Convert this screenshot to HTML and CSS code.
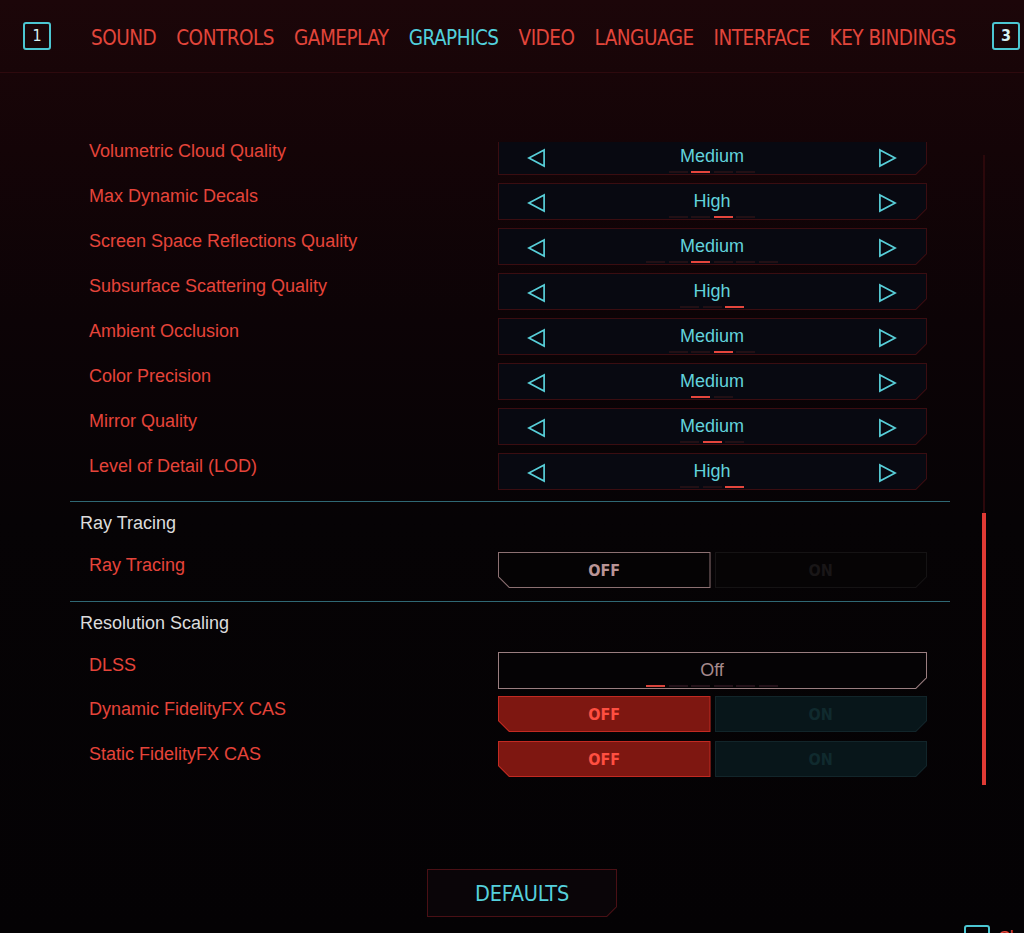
FILE: index.html
```html
<!DOCTYPE html>
<html lang="en">
<head>
<meta charset="utf-8">
<title>Settings - Graphics</title>
<link rel="stylesheet" href="styles.css">
</head>
<body>
<div class="screen">
  <header class="topbar">
    <span class="keycap">1</span>
    <nav class="tabs">
      <span class="tab">SOUND</span>
      <span class="tab">CONTROLS</span>
      <span class="tab">GAMEPLAY</span>
      <span class="tab tab-active">GRAPHICS</span>
      <span class="tab">VIDEO</span>
      <span class="tab">LANGUAGE</span>
      <span class="tab">INTERFACE</span>
      <span class="tab">KEY BINDINGS</span>
    </nav>
    <span class="keycap keycap-right">3</span>
  </header>

  <main class="main">
    <div class="viewport">
      <div class="list">
        <div class="group">
          <div class="row">
            <span class="label">Volumetric Cloud Quality</span>
            <div class="sel">
              <svg class="arrow" viewBox="0 0 20 20"><path d="M18 1.5 L2 10 L18 18.5 Z"/></svg>
              <div class="val"><span class="val-text">Medium</span><div class="dashes"><i></i><i class="on"></i><i></i><i></i></div></div>
              <svg class="arrow" viewBox="0 0 20 20"><path d="M2 1.5 L18 10 L2 18.5 Z"/></svg>
            </div>
          </div>
          <div class="row">
            <span class="label">Max Dynamic Decals</span>
            <div class="sel">
              <svg class="arrow" viewBox="0 0 20 20"><path d="M18 1.5 L2 10 L18 18.5 Z"/></svg>
              <div class="val"><span class="val-text">High</span><div class="dashes"><i></i><i></i><i class="on"></i><i></i></div></div>
              <svg class="arrow" viewBox="0 0 20 20"><path d="M2 1.5 L18 10 L2 18.5 Z"/></svg>
            </div>
          </div>
          <div class="row">
            <span class="label">Screen Space Reflections Quality</span>
            <div class="sel">
              <svg class="arrow" viewBox="0 0 20 20"><path d="M18 1.5 L2 10 L18 18.5 Z"/></svg>
              <div class="val"><span class="val-text">Medium</span><div class="dashes"><i></i><i></i><i class="on"></i><i></i><i></i><i></i></div></div>
              <svg class="arrow" viewBox="0 0 20 20"><path d="M2 1.5 L18 10 L2 18.5 Z"/></svg>
            </div>
          </div>
          <div class="row">
            <span class="label">Subsurface Scattering Quality</span>
            <div class="sel">
              <svg class="arrow" viewBox="0 0 20 20"><path d="M18 1.5 L2 10 L18 18.5 Z"/></svg>
              <div class="val"><span class="val-text">High</span><div class="dashes"><i></i><i></i><i class="on"></i></div></div>
              <svg class="arrow" viewBox="0 0 20 20"><path d="M2 1.5 L18 10 L2 18.5 Z"/></svg>
            </div>
          </div>
          <div class="row">
            <span class="label">Ambient Occlusion</span>
            <div class="sel">
              <svg class="arrow" viewBox="0 0 20 20"><path d="M18 1.5 L2 10 L18 18.5 Z"/></svg>
              <div class="val"><span class="val-text">Medium</span><div class="dashes"><i></i><i></i><i class="on"></i><i></i></div></div>
              <svg class="arrow" viewBox="0 0 20 20"><path d="M2 1.5 L18 10 L2 18.5 Z"/></svg>
            </div>
          </div>
          <div class="row">
            <span class="label">Color Precision</span>
            <div class="sel">
              <svg class="arrow" viewBox="0 0 20 20"><path d="M18 1.5 L2 10 L18 18.5 Z"/></svg>
              <div class="val"><span class="val-text">Medium</span><div class="dashes"><i class="on"></i><i></i></div></div>
              <svg class="arrow" viewBox="0 0 20 20"><path d="M2 1.5 L18 10 L2 18.5 Z"/></svg>
            </div>
          </div>
          <div class="row">
            <span class="label">Mirror Quality</span>
            <div class="sel">
              <svg class="arrow" viewBox="0 0 20 20"><path d="M18 1.5 L2 10 L18 18.5 Z"/></svg>
              <div class="val"><span class="val-text">Medium</span><div class="dashes"><i></i><i class="on"></i><i></i></div></div>
              <svg class="arrow" viewBox="0 0 20 20"><path d="M2 1.5 L18 10 L2 18.5 Z"/></svg>
            </div>
          </div>
          <div class="row">
            <span class="label">Level of Detail (LOD)</span>
            <div class="sel">
              <svg class="arrow" viewBox="0 0 20 20"><path d="M18 1.5 L2 10 L18 18.5 Z"/></svg>
              <div class="val"><span class="val-text">High</span><div class="dashes"><i></i><i></i><i class="on"></i></div></div>
              <svg class="arrow" viewBox="0 0 20 20"><path d="M2 1.5 L18 10 L2 18.5 Z"/></svg>
            </div>
          </div>
        </div>

        <section class="sec sec-ray">
          <h2 class="sec-title">Ray Tracing</h2>
          <div class="row row-toggle">
            <span class="label">Ray Tracing</span>
            <div class="toggle">
              <span class="opt opt-off-sel">OFF</span>
              <span class="opt opt-on-dim">ON</span>
            </div>
          </div>
        </section>

        <section class="sec sec-res">
          <h2 class="sec-title">Resolution Scaling</h2>
          <div class="row row-dlss">
            <span class="label">DLSS</span>
            <div class="sel sel-plain">
              <div class="val val-plain"><span class="val-text">Off</span><div class="dashes"><i class="on"></i><i></i><i></i><i></i><i></i><i></i></div></div>
            </div>
          </div>
          <div class="row row-toggle">
            <span class="label">Dynamic FidelityFX CAS</span>
            <div class="toggle">
              <span class="opt opt-off-red">OFF</span>
              <span class="opt opt-on-teal">ON</span>
            </div>
          </div>
          <div class="row row-toggle">
            <span class="label">Static FidelityFX CAS</span>
            <div class="toggle">
              <span class="opt opt-off-red">OFF</span>
              <span class="opt opt-on-teal">ON</span>
            </div>
          </div>
        </section>
      </div>
    </div>
    <div class="scrollbar"><div class="thumb"></div></div>
  </main>

  <div class="actions">
    <button class="defaults">DEFAULTS</button>
  </div>

  <div class="hints">
    <span class="keycap keycap-small"></span>
    <span class="hint-text">Close</span>
  </div>
</div>
</body>
</html>
```

FILE: styles.css
```css
* { box-sizing: border-box; }

html, body {
  margin: 0;
  padding: 0;
}

body {
  width: 1024px;
  height: 933px;
  overflow: hidden;
  background: linear-gradient(180deg, #1c0609 0px, #180508 72px, #140407 150px, #0c0306 320px, #060305 520px, #040204 933px);
  font-family: "Liberation Sans", Arial, sans-serif;
  color: #e5443a;
}

.screen {
  width: 1024px;
  height: 933px;
  display: flex;
  flex-direction: column;
}

/* ---------- top bar ---------- */
.topbar {
  height: 73px;
  flex: none;
  display: flex;
  align-items: center;
  padding: 0 4px 1px 23px;
  border-bottom: 1px solid #2e0a0e;
}

.keycap {
  width: 28px;
  height: 28px;
  border: 2px solid #4cc6d2;
  border-radius: 3px;
  display: flex;
  align-items: center;
  justify-content: center;
  font-family: "DejaVu Sans Condensed", "DejaVu Sans", sans-serif;
  font-size: 16px;
  color: #d6f2f4;
  flex: none;
}

.keycap-right { margin-left: auto; font-weight: bold; }

.tabs {
  display: flex;
  gap: 20px;
  margin-left: 40px;
  padding-top: 5px;
  white-space: nowrap;
}

.tab {
  font-family: "DejaVu Sans Condensed", "DejaVu Sans", sans-serif;
  font-size: 20.5px;
  letter-spacing: -0.5px;
  color: #e2453b;
}

.tab-active { color: #52d0dc; }

/* ---------- main list ---------- */
.main {
  display: flex;
  padding-top: 69px;
  flex: none;
}

.viewport {
  margin-left: 70px;
  width: 880px;
  height: 648px;
  overflow: hidden;
  flex: none;
}

.list {
  margin-top: -4px;
  display: flex;
  flex-direction: column;
}

.group { display: flex; flex-direction: column; }

.row {
  display: flex;
  align-items: flex-start;
  justify-content: space-between;
  padding-right: 23px;
  margin-bottom: 8px;
}

.group > .row:last-child,
.sec > .row:last-child { margin-bottom: 0; }

.label {
  padding-left: 19px;
  padding-top: 2px;
  font-size: 18px;
  line-height: 22px;
  color: #e5443a;
  white-space: nowrap;
}

/* selector box */
.sel {
  position: relative;
  width: 429px;
  height: 37px;
  display: flex;
  align-items: center;
  justify-content: space-between;
  padding: 0 30px 0 29px;
  background: #3a0d11;
  clip-path: polygon(0 0, 100% 0, 100% calc(100% - 11px), calc(100% - 11px) 100%, 0 100%);
}

.sel::before {
  content: "";
  position: absolute;
  inset: 1px;
  background: #080911;
  clip-path: polygon(0 0, 100% 0, 100% calc(100% - 10.5px), calc(100% - 10.5px) 100%, 0 100%);
}

.arrow {
  position: relative;
  width: 19px;
  height: 20px;
  margin-top: 3px;
  fill: none;
  stroke: #58cfd9;
  stroke-width: 1.8;
  stroke-linejoin: miter;
}

.val {
  position: relative;
  align-self: flex-start;
  padding-top: 8px;
  display: flex;
  flex-direction: column;
  align-items: center;
}

.val-text {
  font-size: 18px;
  line-height: 20px;
  color: #62d3dc;
}

.dashes {
  display: flex;
  gap: 3.5px;
  margin-top: 5px;
}

.dashes i {
  display: block;
  width: 19px;
  height: 2px;
  background: #221015;
}

.dashes i.on { background: #e5463d; }

/* sections */
.sec {
  border-top: 1px solid #2f6874;
}

.sec-ray { margin-top: 11px; }
.sec-res { margin-top: 13px; }

.sec-title {
  margin: 0;
  padding: 10px 0 0 10px;
  font-size: 18px;
  line-height: 22px;
  font-weight: normal;
  color: #dcdcdc;
}

.sec .row:first-of-type { margin-top: 18px; }

.row-dlss { margin-bottom: 7px; }
.row-toggle { margin-bottom: 9px; }

/* DLSS plain selector */
.sel-plain {
  background: #9a7e80;
  justify-content: center;
}

.sel-plain::before { background: #050305; }

.val-plain .val-text { color: #a68a8c; }
.val-plain .dashes i { background: #24121a; }
.val-plain .dashes i.on { background: #d9443c; }

/* toggles */
.toggle {
  width: 429px;
  height: 36px;
  display: flex;
  gap: 4px;
}

.opt {
  position: relative;
  flex: 1;
  display: flex;
  align-items: center;
  justify-content: center;
  font-family: "DejaVu Sans Condensed", "DejaVu Sans", sans-serif;
  font-weight: bold;
  font-size: 16px;
  padding-top: 1px;
}

.opt-off-sel, .opt-off-red {
  clip-path: polygon(0 0, 100% 0, 100% 100%, 11px 100%, 0 calc(100% - 11px));
}

.opt-on-dim, .opt-on-teal {
  clip-path: polygon(0 0, 100% 0, 100% calc(100% - 11px), calc(100% - 11px) 100%, 0 100%);
}

.opt::before {
  content: "";
  position: absolute;
  inset: 1px;
  z-index: -1;
}

.opt-off-sel { background: #8c7072; color: #b99496; isolation: isolate; }
.opt-off-sel::before {
  background: #050304;
  clip-path: polygon(0 0, 100% 0, 100% 100%, 10.5px 100%, 0 calc(100% - 10.5px));
}

.opt-on-dim { background: #151314; color: #191617; isolation: isolate; }
.opt-on-dim::before {
  background: #060405;
  clip-path: polygon(0 0, 100% 0, 100% calc(100% - 10.5px), calc(100% - 10.5px) 100%, 0 100%);
}

.opt-off-red { background: #c32a22; color: #ff4f41; isolation: isolate; }
.opt-off-red::before {
  background: #7e1711;
  clip-path: polygon(0 0, 100% 0, 100% 100%, 10.5px 100%, 0 calc(100% - 10.5px));
}

.opt-on-teal { background: #12252a; color: #102a2e; isolation: isolate; }
.opt-on-teal::before {
  background: #08161a;
  clip-path: polygon(0 0, 100% 0, 100% calc(100% - 10.5px), calc(100% - 10.5px) 100%, 0 100%);
}

/* scrollbar */
.scrollbar {
  margin-left: 32px;
  margin-top: 13px;
  width: 4px;
  height: 630px;
  flex: none;
  display: flex;
  flex-direction: column;
  justify-content: flex-end;
  background: linear-gradient(90deg, transparent 1px, #2c080b 1px, #2c080b 3px, transparent 3px);
}

.thumb {
  height: 272px;
  background: #e03a34;
}

/* bottom actions */
.actions {
  flex: none;
  padding-left: 427px;
  margin-top: 79px;
}

.defaults {
  position: relative;
  width: 190px;
  height: 48px;
  border: 0;
  padding: 0;
  background: #4a1015;
  clip-path: polygon(0 0, 100% 0, 100% calc(100% - 10px), calc(100% - 10px) 100%, 0 100%);
  font-family: "DejaVu Sans Condensed", "DejaVu Sans", sans-serif;
  font-size: 21.5px;
  letter-spacing: -0.2px;
  color: #55d0dc;
  isolation: isolate;
  display: flex;
  align-items: center;
  justify-content: center;
}

.defaults::before {
  content: "";
  position: absolute;
  inset: 1px;
  z-index: -1;
  background: #0a0508;
  clip-path: polygon(0 0, 100% 0, 100% calc(100% - 9.5px), calc(100% - 9.5px) 100%, 0 100%);
}

.hints {
  flex: none;
  margin-top: 8px;
  display: flex;
  justify-content: flex-end;
  gap: 7px;
  margin-right: -20px;
}

.keycap-small {
  width: 26px;
  height: 26px;
}

.hint-text {
  font-family: "DejaVu Sans Condensed", "DejaVu Sans", sans-serif;
  font-size: 19px;
  color: #e2453b;
  line-height: 26px;
}
```
